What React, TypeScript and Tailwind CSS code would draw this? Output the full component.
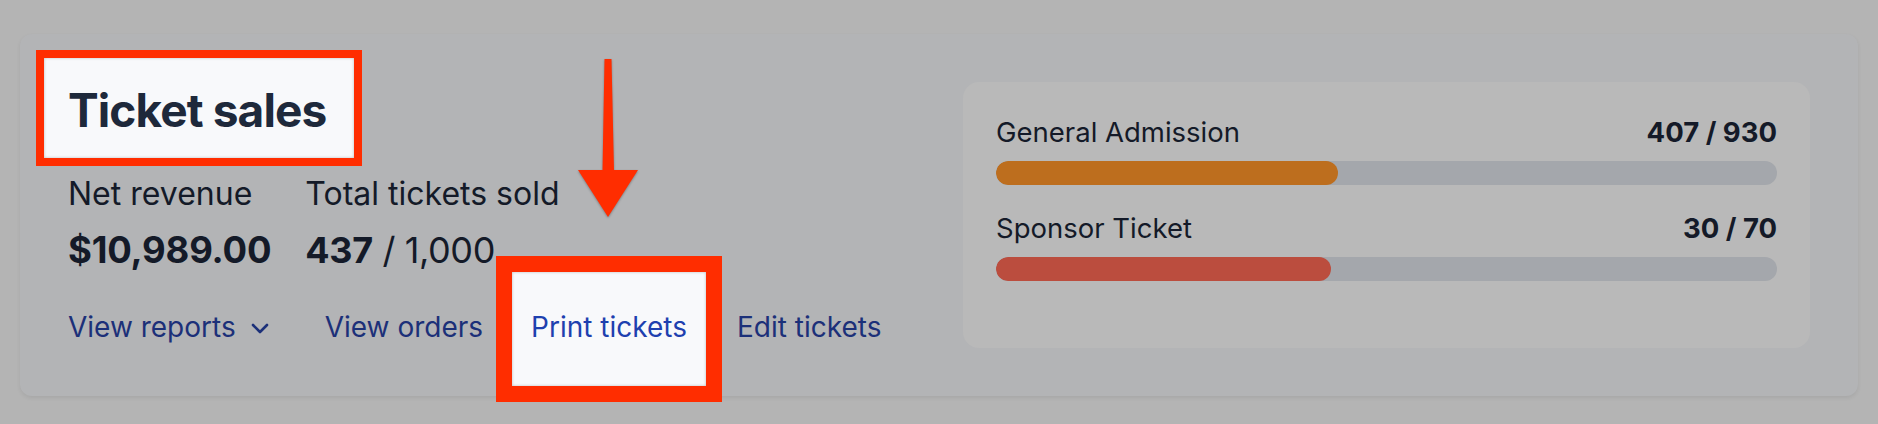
import React from "react"

const bars = [
    { name: "General Admission", sold: 407, total: 930, color: "bg-[#bd6e1e]" },
    { name: "Sponsor Ticket", sold: 30, total: 70, color: "bg-[#bb4d3e]" },
]

function Chevron() {
    return (
        <svg width="18" height="11" viewBox="0 0 18 11" fill="none" className="ml-[15px] mt-[2px]">
            <polyline points="2,2 9,9 16,2" stroke="currentColor" strokeWidth="2.6" strokeLinecap="round" strokeLinejoin="round" />
        </svg>
    )
}

export default function App() {
    return (
        <div className="relative min-h-screen w-full overflow-hidden bg-[#b4b4b4] font-['Inter',sans-serif]">
            <div className="ml-[20px] mt-[34px] flex w-[1838px] items-start justify-between rounded-[12px] bg-[#b3b4b6] p-[48px] shadow-[0_2px_4px_rgba(0,0,0,0.07)]">
                {/* Left side */}
                <div className="flex flex-col">
                    <div className="relative self-start">
                        <span className="absolute -top-[32px] -bottom-[28px] -left-[32px] -right-[36px] border-[8px] border-[#ff2d00] bg-[#f8f9fb] shadow-[inset_0_0_3px_rgba(0,0,0,0.25)]" />
                        <h2 className="relative text-[46px] font-bold leading-[56px] tracking-[-0.9px] text-[#1e293b]">Ticket sales</h2>
                    </div>

                    <div className="mt-[36px] flex gap-[34px] text-[#141a28]">
                        <div>
                            <p className="text-[32px] leading-[40px]">Net revenue</p>
                            <p className="mt-[14px] text-[36.5px] font-bold leading-[44px] tracking-[-0.2px]">$10,989.00</p>
                        </div>
                        <div>
                            <p className="text-[32px] leading-[40px]">Total tickets sold</p>
                            <p className="mt-[14px] text-[36px] leading-[44px] tracking-[-0.4px]">
                                <span className="font-bold">437</span> / 1,000
                            </p>
                        </div>
                    </div>

                    <div className="mt-[37px] flex items-center text-[28px] leading-[36px] text-[#1c3079]">
                        <span className="flex items-center">View reports <Chevron /></span>
                        <span className="ml-[56px]">View orders</span>
                        <span className="relative ml-[48px]">
                            <span className="absolute -top-[53px] -bottom-[57px] -left-[35px] -right-[35px] border-[16px] border-[#ff2d00] bg-[#f8f9fb] shadow-[inset_0_0_3px_rgba(0,0,0,0.25)]" />
                            <span className="relative text-[#1e40af]">Print tickets</span>
                        </span>
                        <span className="ml-[50px]">Edit tickets</span>
                    </div>
                </div>

                {/* Right side */}
                <div className="flex h-[266px] w-[847px] flex-col gap-[26px] rounded-[16px] bg-[#b9b9b9] px-[33px] pt-[33px]">
                    {bars.map((b) => (
                        <div key={b.name}>
                            <div className="flex items-center justify-between text-[27.5px] leading-[34px] text-[#141a28]">
                                <span>{b.name}</span>
                                <span className="font-bold">{b.sold} / {b.total}</span>
                            </div>
                            <div className="mt-[12px] h-[24px] w-full overflow-hidden rounded-full bg-[#a4a7ac]">
                                <div className={`h-full rounded-full ${b.color}`} style={{ width: `${(b.sold / b.total) * 100}%` }} />
                            </div>
                        </div>
                    ))}
                </div>
            </div>

            {/* Annotation arrow */}
            <svg className="absolute left-[570px] top-[52px] drop-shadow-[0_1px_1px_rgba(0,0,0,0.3)]" width="76" height="170" viewBox="0 0 76 170">
                <polygon points="34.5,7 41.5,7 44,118 68,118 38,165 8,118 32.5,118" fill="#ff2d00" />
            </svg>
        </div>
    )
}
